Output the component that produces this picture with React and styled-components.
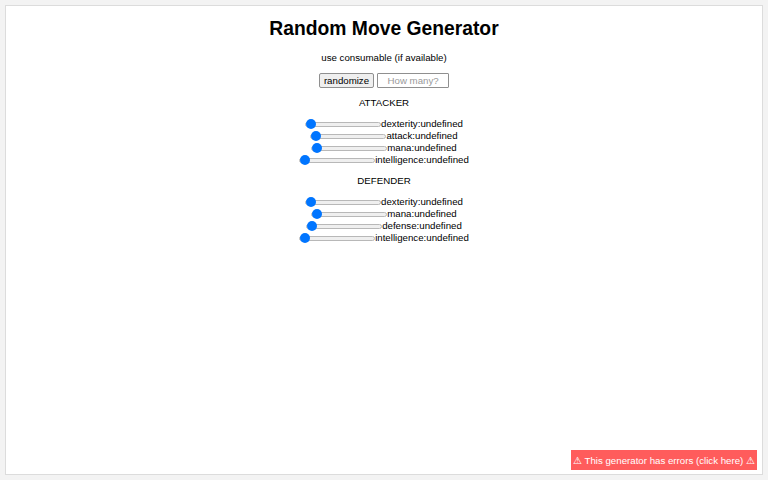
import styled, { createGlobalStyle } from 'styled-components';

const GlobalStyle = createGlobalStyle`
    html, body {
        margin: 0;
        padding: 0;
        background: #f3f3f3;
        font-family: "Liberation Sans", Arial, sans-serif;
    }
`;

const Page = styled.div`
    height: 480px;
    padding: 5px;
    box-sizing: border-box;
    display: flex;
`;

const Panel = styled.main`
    flex: 1;
    background: #fff;
    border: 1px solid #dcdcdc;
    position: relative;
    text-align: center;
    color: #000;
    font-size: 9.7px;
`;

const Title = styled.h1`
    font-size: 19.3px;
    font-weight: bold;
    margin: 11px 0 12px;
    line-height: 23px;
`;

const Line = styled.p`
    margin: 0;
    line-height: 12px;
`;

const Controls = styled.div`
    display: flex;
    justify-content: center;
    gap: 3px;
    margin: 9px 0 9px;
`;

const Button = styled.button`
    font: inherit;
    font-size: 9.7px;
    height: 15px;
    padding: 0 4px;
    background: #efefef;
    border: 1px solid #8f8f8f;
    border-radius: 2px;
    color: #000;
`;

const CountInput = styled.input`
    font: inherit;
    font-size: 9.7px;
    width: 72px;
    height: 15px;
    box-sizing: border-box;
    border: 1px solid #8f8f8f;
    border-radius: 1px;
    text-align: center;
    padding: 0;
    &::placeholder { color: #999; }
`;

const Heading = styled.h2`
    font-size: 9.7px;
    font-weight: normal;
    margin: 0 0 9px;
    line-height: 12px;
`;

const Group = styled.section`
    margin-bottom: 9px;
`;

const Row = styled.div`
    display: flex;
    justify-content: center;
    align-items: center;
    height: 12px;
    line-height: 12px;
`;

const Slider = styled.input`
    -webkit-appearance: none;
    appearance: none;
    width: 76px;
    height: 10px;
    margin: 0;
    background: transparent;
    &::-webkit-slider-runnable-track {
        height: 5px;
        background: #efefef;
        border: 1px solid #b8b8b8;
        border-radius: 3px;
        box-sizing: border-box;
    }
    &::-webkit-slider-thumb {
        -webkit-appearance: none;
        width: 10px;
        height: 10px;
        margin-top: -3.5px;
        border-radius: 50%;
        background: #0075ff;
        border: none;
    }
`;

const ErrorBadge = styled.button`
    position: absolute;
    right: 5px;
    bottom: 4px;
    height: 20px;
    padding: 0 2px;
    border: none;
    background: #ff5c5c;
    color: #fff;
    font: inherit;
    font-size: 9.7px;
`;

const attacker = ['dexterity', 'attack', 'mana', 'intelligence'];
const defender = ['dexterity', 'mana', 'defense', 'intelligence'];

const StatGroup = ({ title, stats }) => (
    <Group>
        <Heading>{title}</Heading>
        {stats.map((name) => (
            <Row key={name}>
                <Slider type="range" min="0" max="100" defaultValue={0} />
                <span>{name}:undefined</span>
            </Row>
        ))}
    </Group>
);

const App = () => (
    <Page>
        <GlobalStyle />
        <Panel>
            <Title>Random Move Generator</Title>
            <Line>use consumable (if available)</Line>
            <Controls>
                <Button>randomize</Button>
                <CountInput placeholder="How many?" />
            </Controls>
            <StatGroup title="ATTACKER" stats={attacker} />
            <StatGroup title="DEFENDER" stats={defender} />
            <ErrorBadge>⚠ This generator has errors (click here) ⚠</ErrorBadge>
        </Panel>
    </Page>
);

export default App;
